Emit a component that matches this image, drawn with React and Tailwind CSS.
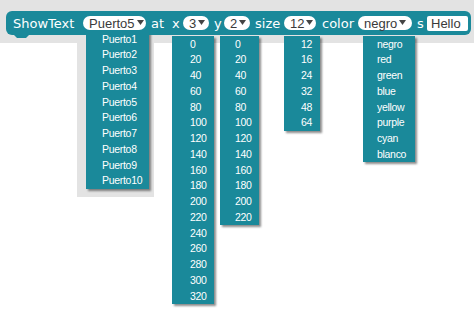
import React from "react";

const TEAL = "bg-[#1a899a]";

function Tri() {
  return (
    <svg width="7" height="5" viewBox="0 0 7 5" className="shrink-0 -mt-[2px]">
      <path d="M0 0 H7 L3.5 5 Z" fill="#444" />
    </svg>
  );
}

function Pill({ label, width, ml, pl = "pl-[6px]" }) {
  return (
    <div
      className={`flex items-center ${pl} gap-[2px] h-[14px] rounded-full bg-white text-[13px] leading-none text-[#3a3a3a] shrink-0`}
      style={{ width, marginLeft: ml }}
    >
      <span className="font-['Liberation_Sans',Arial,sans-serif]">{label}</span>
      <Tri />
    </div>
  );
}

function Word({ children, ml, width }) {
  return (
    <span
      className="text-white text-[13px] leading-none whitespace-nowrap shrink-0"
      style={{ marginLeft: ml, width }}
    >
      {children}
    </span>
  );
}

function Menu({ items, left, top, width, pad }) {
  return (
    <div
      className={`absolute ${TEAL} shadow-[2px_2px_2px_rgba(0,0,0,0.45)] flex flex-col`}
      style={{ left, top, width }}
    >
      {items.map((it) => (
        <div
          key={it}
          className="h-[15.75px] flex items-center text-white text-[10.5px] tracking-[-0.3px] leading-none font-['Liberation_Sans',Arial,sans-serif]"
          style={{ paddingLeft: pad }}
        >
          {it}
        </div>
      ))}
    </div>
  );
}

export default function App() {
  const puertos = Array.from({ length: 10 }, (_, i) => `Puerto${i + 1}`);
  const xs = Array.from({ length: 17 }, (_, i) => String(i * 20));
  const ys = Array.from({ length: 12 }, (_, i) => String(i * 20));
  const sizes = ["12", "16", "24", "32", "48", "64"];
  const colors = ["negro", "red", "green", "blue", "yellow", "purple", "cyan", "blanco"];

  return (
    <div className="relative w-[474px] h-[310px] bg-white overflow-hidden font-['DejaVu_Sans',Verdana,sans-serif]">
      <div className="h-[43px] bg-[#e3e3e3] pt-[11px] pl-[6px]">
        <div className={`relative z-10 w-[465px] h-[24px] ${TEAL} rounded-[6px] flex items-center pl-[7px]`}>
          <Word width={64}>ShowText</Word>
          <Pill label="Puerto5" width={63} ml={6} />
          <Word ml={5} width={13}>at</Word>
          <Word ml={8} width={8}>x</Word>
          <Pill label="3" width={26} ml={3} />
          <Word ml={5} width={8}>y</Word>
          <Pill label="2" width={26} ml={2} />
          <Word ml={5} width={25}>size</Word>
          <Pill label="12" width={32} ml={4} />
          <Word ml={6} width={32}>color</Word>
          <Pill label="negro" width={54} ml={4} />
          <Word ml={5} width={7}>s</Word>
          <div className="ml-[3px] w-[41px] h-[15px] bg-white rounded-[2px] flex items-center pl-[4px] text-[13px] leading-none text-[#3a3a3a] font-['Liberation_Sans',Arial,sans-serif]">
            Hello
          </div>
          <svg width="15" height="3" viewBox="0 0 15 3" className="absolute left-[8px] top-[24px]">
            <path d="M0 0 L3 3 H12 L15 0 Z" fill="#1a899a" />
          </svg>
        </div>
      </div>
      <div className="absolute left-[77px] top-[43px] w-[77px] h-[154px] bg-[#e3e3e3]" />
      <Menu items={puertos} left={86} top={31} width={63} pad={16} />
      <Menu items={xs} left={172} top={36} width={42} pad={18} />
      <Menu items={ys} left={220} top={36} width={39} pad={15} />
      <Menu items={sizes} left={284} top={36} width={36} pad={17} />
      <Menu items={colors} left={363} top={36} width={52} pad={14} />
    </div>
  );
}
